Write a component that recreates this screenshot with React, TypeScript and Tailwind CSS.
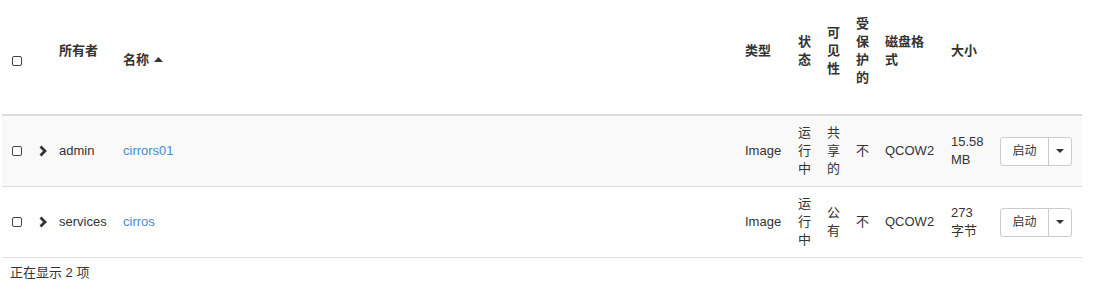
import React from "react";

const cols =
  "grid grid-cols-[29px_20px_64px_1fr_53px_29px_29px_29px_66px_50px_89px]";

function Box() {
  return <span className="block w-[10px] h-[10px] border border-[#444] rounded-[2px] bg-white" />;
}

function Chevron() {
  return (
    <svg width="8" height="12" viewBox="0 0 8 12" className="block">
      <path d="M1.5 1.5 L6 6 L1.5 10.5" fill="none" stroke="#333" strokeWidth="2.8" />
    </svg>
  );
}

function LaunchButton() {
  return (
    <div className="flex h-[29px] w-[72px] border border-[#ccc] rounded-[3px] bg-white">
      <div className="w-[47px] flex items-center justify-center text-[12px] text-[#333]">启动</div>
      <div className="flex-1 border-l border-[#ccc] flex items-center justify-center">
        <span className="block w-0 h-0 border-l-[4px] border-r-[4px] border-t-[4px] border-l-transparent border-r-transparent border-t-[#333]" />
      </div>
    </div>
  );
}

type Row = {
  owner: string;
  name: string;
  vis: string;
  size: string;
  bg: string;
};

const rows: Row[] = [
  { owner: "admin", name: "cirrors01", vis: "共享的", size: "15.58 MB", bg: "bg-[#f9f9f9]" },
  { owner: "services", name: "cirros", vis: "公有", size: "273 字节", bg: "bg-white" },
];

export default function App() {
  const cell = "flex items-center px-[8px] py-[8px] break-all";
  return (
    <div
      className="w-[1096px] h-[297px] bg-white text-[13px] leading-[18px] text-[#333]"
      style={{ fontFamily: '"Liberation Sans", "Noto Sans CJK SC", Arial, sans-serif' }}
    >
      <div className="ml-[2px] w-[1080px]">
        {/* header */}
        <div className={`${cols} h-[116px] border-b-2 border-[#ddd] font-bold`}>
          <div className="flex items-center pl-[10px] pt-[20px] pb-[12px]">
            <Box />
          </div>
          <div />
          <div className="flex items-center px-[8px] pb-[12px]">所有者</div>
          <div className="flex items-center px-[8px] pt-[18px] pb-[12px]">
            <span>名称</span>
            <svg width="9" height="5" viewBox="0 0 9 5" className="ml-[5px] mb-[2px]">
              <polygon points="0,5 9,5 4.5,0" fill="#333" />
            </svg>
          </div>
          <div className="flex items-center px-[8px] pb-[12px]">类型</div>
          <div className="flex items-center px-[8px] pb-[12px]">状态</div>
          <div className="flex items-center px-[8px] pb-[12px]">可见性</div>
          <div className="flex items-center px-[8px] pb-[12px]">受保护的</div>
          <div className="flex items-center px-[8px] pb-[12px]">磁盘格式</div>
          <div className="flex items-center px-[8px] pb-[12px]">大小</div>
          <div />
        </div>
        {/* rows */}
        {rows.map((r) => (
          <div key={r.name} className={`${cols} ${r.bg} border-b border-[#ddd]`}>
            <div className="flex items-center pl-[10px]">
              <Box />
            </div>
            <div className="flex items-center pl-[8px]">
              <Chevron />
            </div>
            <div className={cell}>{r.owner}</div>
            <div className={cell}>
              <span className="text-[#4a8bcc]">{r.name}</span>
            </div>
            <div className={cell}>Image</div>
            <div className={cell}>运行中</div>
            <div className={cell}>{r.vis}</div>
            <div className={cell}>不</div>
            <div className={cell}>QCOW2</div>
            <div className="flex items-center px-[8px] py-[8px]">{r.size}</div>
            <div className="flex items-center pl-[7px]">
              <LaunchButton />
            </div>
          </div>
        ))}
        <div className="pl-[8px] pt-[6px]">正在显示 2 项</div>
      </div>
    </div>
  );
}
